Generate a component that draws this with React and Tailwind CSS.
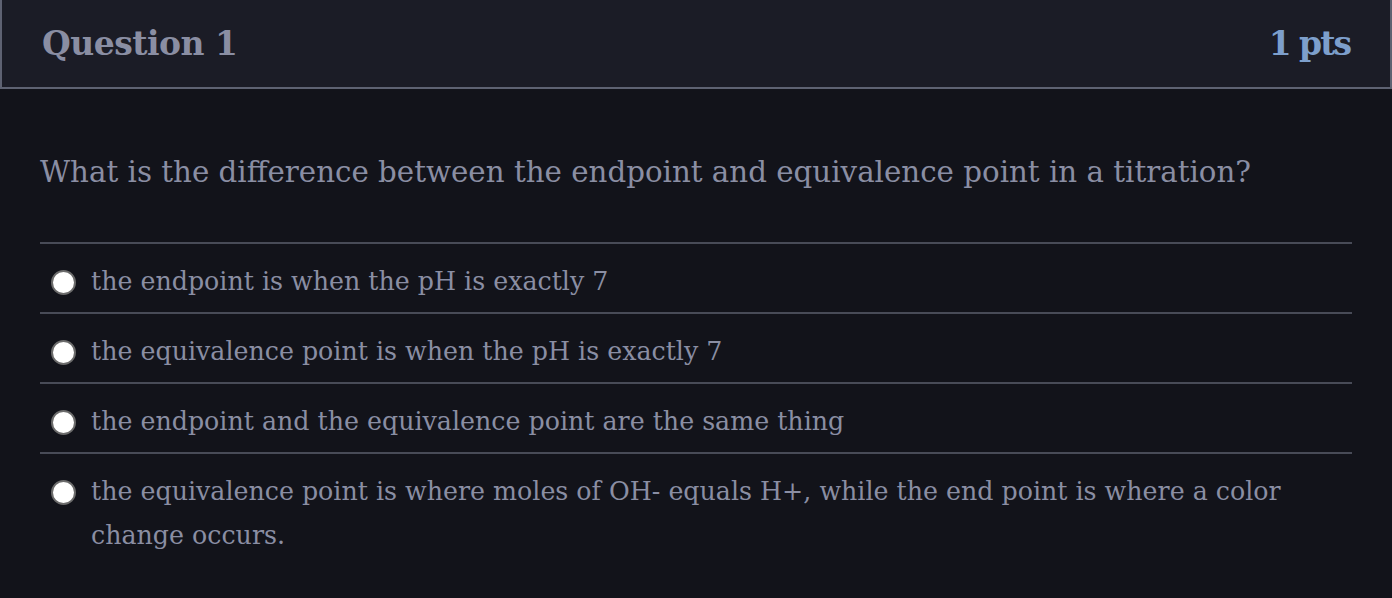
export default function App() {
  const options = [
    "the endpoint is when the pH is exactly 7",
    "the equivalence point is when the pH is exactly 7",
    "the endpoint and the equivalence point are the same thing",
    "the equivalence point is where moles of OH- equals H+, while the end point is where a color change occurs.",
  ];

  return (
    <div className="min-h-[598px] w-[1392px] bg-[#12131a] font-['DejaVu_Serif',serif]">
      <div className="flex h-[89px] items-center justify-between border-x-2 border-b-2 border-[#5e6272] bg-[#1b1c26] pl-[40px] pr-[40px]">
        <h2 className="text-[33px] font-bold tracking-[-0.5px] text-[#8a8ea3]">Question 1</h2>
        <span className="text-[33px] font-bold tracking-[-2px] text-[#7d9fcc]">1 pts</span>
      </div>

      <div className="px-10 pt-[61px]">
        <p className="text-[29.3px] leading-[44px] text-[#8a8ea3]">
          What is the difference between the endpoint and equivalence point in a titration?
        </p>

        <div className="mt-[48px] border-t-2 border-[#484b57]">
          {options.map((text, i) => (
            <label
              key={i}
              className={
                "flex items-start gap-[15px] pt-[16px] pb-[8px] pl-[11px] " +
                (i < options.length - 1 ? "border-b-2 border-[#484b57]" : "")
              }
            >
              <span className="mt-[10px] h-[25px] w-[25px] shrink-0 rounded-full border-2 border-[#6b6b6b] bg-white" />
              <span className="text-[25.3px] leading-[44px] text-[#8a8ea3]">{text}</span>
            </label>
          ))}
        </div>
      </div>
    </div>
  );
}
